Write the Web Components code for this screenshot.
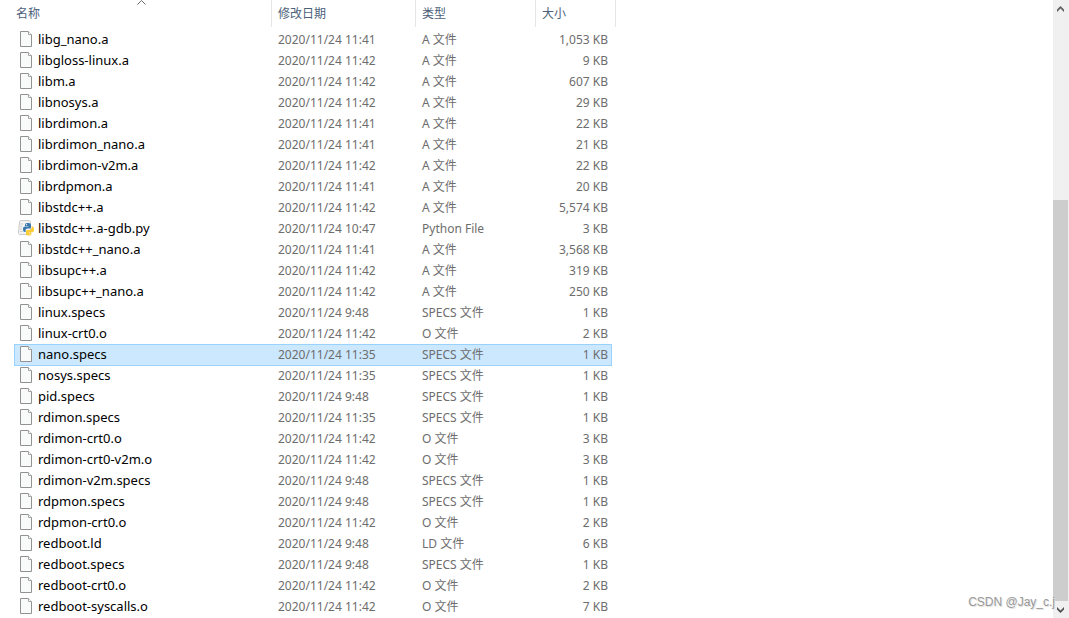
<!DOCTYPE html>
<html lang="zh-CN">
<head>
<meta charset="utf-8">
<title>文件列表</title>
<style>
  html, body { margin: 0; background: #fff; }
  body { font-family: "Noto Sans", "Noto Sans CJK SC", sans-serif; font-size: 12px; line-height: 21px; }
</style>
</head>
<body>
<file-window>
  <file-list></file-list>
  <scroll-rail slot="rail"></scroll-rail>
  <water-mark slot="mark">CSDN @Jay_c.j</water-mark>
</file-window>

<script>
const define = (name, html, setup) => customElements.define(name, class extends HTMLElement {
  constructor() {
    super();
    this.attachShadow({ mode: "open" }).innerHTML = html;
  }
  connectedCallback() {
    if (setup) setup(this, this.shadowRoot);
  }
});

define("file-window", `
  <style>
    :host { display: flex; min-height: 100vh; position: relative; }
    main { flex: 1; min-width: 0; }
  </style>
  <main><slot></slot></main>
  <slot name="rail"></slot>
  <slot name="mark"></slot>`);

define("water-mark", `
  <style>
    :host { position: absolute; right: 14px; bottom: 5px; color: #999; font: 12px/21px "Liberation Sans", sans-serif;
            text-shadow: 1px 1px 0 #e4e4e4; pointer-events: none; white-space: nowrap; }
  </style>
  <slot></slot>`);

define("scroll-rail", `
  <style>
    :host { display: flex; flex-direction: column; width: 16px; background: #f0f0f0; }
    button { height: 17px; padding: 0; border: 0; background: none; display: grid; place-items: center start; }
    svg { display: block; }
    .track { flex: 1; display: flex; flex-direction: column; padding-right: 1px; }
    .before { flex: 183; }
    .thumb { flex: 401; background: #cdcdcd; }
  </style>
  <button aria-label="向上滚动"><svg width="15" height="17" viewBox="0 0 15 17"><path d="M4 9.500 7.500 6 11 9.500V12L7.500 8.500 4 12Z" fill="#606060"/></svg></button>
  <div class="track"><div class="before"></div><div class="thumb"></div></div>
  <button aria-label="向下滚动"><svg width="15" height="17" viewBox="0 0 15 17"><path d="M4 6 7.500 9.500 11 6V8.500L7.500 12 4 8.500Z" fill="#505050"/></svg></button>`);

define("file-icon", `
  <style>
    :host { display: block; width: 16px; height: 17px; }
    svg { display: block; }
    .python, :host([kind="python"]) .plain { display: none; }
    :host([kind="python"]) .python { display: block; }
  </style>
  <svg class="plain" width="16" height="16" viewBox="0 0 16 16">
    <path d="M2.500.5H10.500L13.500 3.500V15.500H2.500Z" fill="#f9fbfa" stroke="#929292"/>
    <path d="M10.500.5V3.500H13.500" fill="#fff" stroke="#a4a4a4"/>
  </svg>
  <svg class="python" width="16" height="16" viewBox="0 0 16 16">
    <path d="M1.500 1.500 3 .5H11.500L12.500 2V14.500H1.500L.5 13.500Z" fill="#f3f3f3" stroke="#cacaca"/>
    <path d="M2 4H5M2 6.500H4M2 9H4M2 11.500H5" stroke="#d2d2d2"/>
    <path d="M9.500 3C7.500 3 7 3.800 7 5V6H10.500V6.600H7C5.600 6.600 5 7.700 5 9.200S5.700 12 7 12H7.600V10.500C7.600 9.300 8.400 8.600 9.500 8.600H11.500C12.400 8.600 13 7.900 13 7V5C13 3.600 11.700 3 9.500 3Z" fill="#3977ad"/>
    <path d="M13.500 6.600V8C13.500 9.200 12.600 10 11.500 10H9.500C8.500 10 8 10.700 8 11.500V13.700C8 15 9 15.600 10.800 15.600S13.500 14.900 13.500 13.700V12.800H10.800V12.300H14.200C15.600 12.300 16 11 16 9.500S15.600 6.600 14.500 6.600Z" fill="#fdcc35"/>
    <circle cx="8.500" cy="4.600" r=".7" fill="#fff"/><circle cx="12" cy="14" r=".6" fill="#fff"/>
  </svg>`);

const files = [
  ["libg_nano.a", "2020/11/24 11:41", "A 文件", "1,053"],
  ["libgloss-linux.a", "2020/11/24 11:42", "A 文件", "9"],
  ["libm.a", "2020/11/24 11:42", "A 文件", "607"],
  ["libnosys.a", "2020/11/24 11:42", "A 文件", "29"],
  ["librdimon.a", "2020/11/24 11:41", "A 文件", "22"],
  ["librdimon_nano.a", "2020/11/24 11:41", "A 文件", "21"],
  ["librdimon-v2m.a", "2020/11/24 11:42", "A 文件", "22"],
  ["librdpmon.a", "2020/11/24 11:41", "A 文件", "20"],
  ["libstdc++.a", "2020/11/24 11:42", "A 文件", "5,574"],
  ["libstdc++.a-gdb.py", "2020/11/24 10:47", "Python File", "3"],
  ["libstdc++_nano.a", "2020/11/24 11:41", "A 文件", "3,568"],
  ["libsupc++.a", "2020/11/24 11:42", "A 文件", "319"],
  ["libsupc++_nano.a", "2020/11/24 11:42", "A 文件", "250"],
  ["linux.specs", "2020/11/24 9:48", "SPECS 文件", "1"],
  ["linux-crt0.o", "2020/11/24 11:42", "O 文件", "2"],
  ["nano.specs", "2020/11/24 11:35", "SPECS 文件", "1"],
  ["nosys.specs", "2020/11/24 11:35", "SPECS 文件", "1"],
  ["pid.specs", "2020/11/24 9:48", "SPECS 文件", "1"],
  ["rdimon.specs", "2020/11/24 11:35", "SPECS 文件", "1"],
  ["rdimon-crt0.o", "2020/11/24 11:42", "O 文件", "3"],
  ["rdimon-crt0-v2m.o", "2020/11/24 11:42", "O 文件", "3"],
  ["rdimon-v2m.specs", "2020/11/24 9:48", "SPECS 文件", "1"],
  ["rdpmon.specs", "2020/11/24 9:48", "SPECS 文件", "1"],
  ["rdpmon-crt0.o", "2020/11/24 11:42", "O 文件", "2"],
  ["redboot.ld", "2020/11/24 9:48", "LD 文件", "6"],
  ["redboot.specs", "2020/11/24 9:48", "SPECS 文件", "1"],
  ["redboot-crt0.o", "2020/11/24 11:42", "O 文件", "2"],
  ["redboot-syscalls.o", "2020/11/24 11:42", "O 文件", "7"],
];

define("file-list", `
  <style>
    :host { display: block; padding-left: 10px; }
    table, thead, tbody { display: block; }
    tr { display: grid; }
    th, td { padding: 0; font-weight: 400; text-align: left; white-space: nowrap; }
    thead { margin-bottom: 2px; }
    thead tr { grid-template-columns: 262px 144px 120px 80px; }
    th { position: relative; border-right: 1px solid #e5e5e5; }
    th button { width: 100%; height: 27px; padding: 0 6px; border: 0; background: none; font: inherit;
                line-height: 27px; color: #4c607a; text-align: left; }
    .sort { position: absolute; top: 0; left: 50%; margin-left: -4px; }
    tbody tr { grid-template-columns: 258px 144px 120px 72px; width: 598px; margin-left: 4px; color: #6d6d6d; }
    td { padding-left: 6px; }
    td.name { display: flex; align-items: center; gap: 4px; padding-left: 4px; color: #000; font-size: 13px; }
    td.size { padding-left: 0; text-align: right; }
    tr[aria-selected] { background: #cce8ff;
      box-shadow: inset 1px 1px #99d1ff, inset -1px 0 #99d1ff, 0 1px #99d1ff; }
  </style>
  <table>
    <thead><tr>
      <th aria-sort="ascending"><button>名称</button><svg class="sort" width="9" height="5" viewBox="0 0 9 5"><path d="M.5 4.500 4.500.5 8.500 4.500" fill="none" stroke="#6a6a6a"/></svg></th>
      <th><button>修改日期</button></th>
      <th><button>类型</button></th>
      <th><button>大小</button></th>
    </tr></thead>
    <tbody></tbody>
  </table>`, (host, root) => {
  root.querySelector("tbody").innerHTML = files.map(([name, date, type, size]) => `
    <tr${name === "nano.specs" ? ' aria-selected="true"' : ""}>
      <td class="name"><file-icon${name.endsWith(".py") ? ' kind="python"' : ""}></file-icon><span>${name}</span></td>
      <td>${date}</td><td>${type}</td><td class="size">${size} KB</td>
    </tr>`).join("");
});
</script>
</body>
</html>
